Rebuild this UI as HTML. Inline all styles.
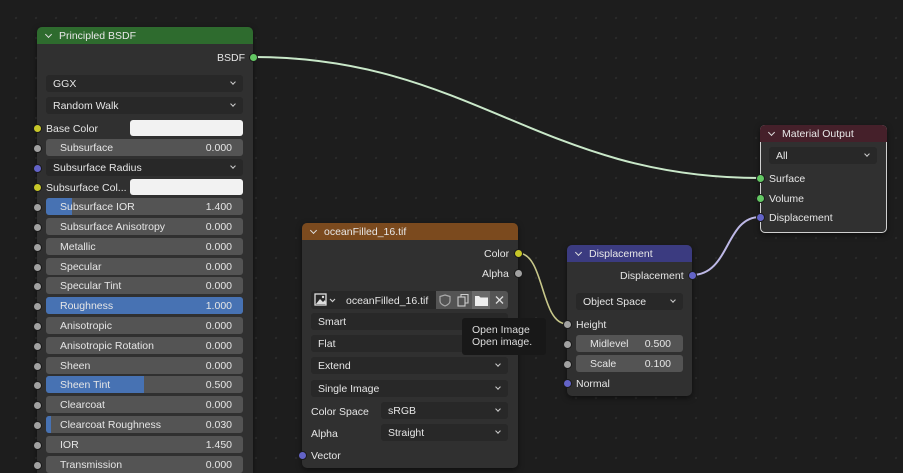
<!DOCTYPE html><html style="width:903px;height:473px;overflow:hidden"><head><style>
*{box-sizing:border-box;margin:0;padding:0}
body{width:903px;height:473px;overflow:hidden;background:#1d1d1d;background-image:radial-gradient(circle,#2a2a2a 1px,transparent 1.3px);background-size:20px 20px;background-position:6px 8px;font-family:"Liberation Sans",sans-serif;font-size:10.5px;color:#e6e6e6;position:relative}
.n{position:absolute;background:#303030;border-radius:5px;box-shadow:0 2px 6px rgba(0,0,0,.5)}
.h{position:absolute;left:0;right:0;top:0;height:17px;border-radius:5px 5px 0 0;padding-left:22px;line-height:18px;color:#e8e8e8}
.h:before{content:"";position:absolute;left:9px;top:5px;width:4px;height:4px;border-right:1.3px solid #ddd;border-bottom:1.3px solid #ddd;transform:rotate(45deg)}
.a{position:absolute;white-space:nowrap;line-height:14px}
.f{position:absolute;height:17px;border-radius:3px;background:#545454;line-height:18px;padding:0 9px 0 14px;overflow:hidden}
.f .v{position:absolute;right:11px;top:0}
.f .b{position:absolute;left:0;top:0;bottom:0;background:#4772b3}
.f span{position:relative}
.d{position:absolute;height:17px;border-radius:3px;background:#282828;line-height:18px;padding-left:7px}
.d:after{content:"";position:absolute;right:8px;top:5px;width:3px;height:3px;border-right:1.2px solid #ccc;border-bottom:1.2px solid #ccc;transform:rotate(45deg)}
.d.nc:after{display:none}
.c{position:absolute;width:7px;height:7px;border-radius:50%;background:#a1a1a1;margin:-3.5px 0 0 -3.5px;box-shadow:0 0 0 1px #1a1a1a}
.g{background:#63c763}.y{background:#c7c729}.p{background:#6363c7}
.w{position:absolute;background:#f2f2f2;border-radius:3px;height:16px}
</style></head><body>
<svg width="903" height="473" style="position:absolute;left:0;top:0">
<path d="M253 57 C470 57 540 178 760 178" stroke="#c9e8c9" stroke-width="2" fill="none"/>
<path d="M518 253 C545 253 540 324 567 324" stroke="#c7c78a" stroke-width="1.6" fill="none"/>
<path d="M692 275 C730 275 725 217 760 217" stroke="#bdb8e6" stroke-width="2" fill="none"/>
</svg>

<div class="n" style="left:37px;top:27px;width:216px;height:446px;border-radius:5px 5px 0 0">
<div class="h" style="background:#2e6b2e">Principled BSDF</div>
</div>
<div class="a" style="left:217px;top:51px">BSDF</div><div class="c g" style="left:253px;top:57px"></div>
<div class="d" style="left:46px;top:75px;width:197px">GGX</div>
<div class="d" style="left:46px;top:97px;width:197px">Random Walk</div>
<div class="c y" style="left:37px;top:128px"></div><div class="a" style="left:46px;top:122px">Base Color</div><div class="w" style="left:130px;top:120px;width:113px"></div>
<div class="c" style="left:37px;top:148px"></div><div class="f" style="left:46px;top:139px;width:197px"><span>Subsurface</span><span class="v">0.000</span></div>
<div class="c p" style="left:37px;top:168px"></div><div class="d" style="left:46px;top:159px;width:197px">Subsurface Radius</div>
<div class="c y" style="left:37px;top:187px"></div><div class="a" style="left:46px;top:181px">Subsurface Col...</div><div class="w" style="left:130px;top:179px;width:113px"></div>
<div class="c" style="left:37px;top:207px"></div><div class="f" style="left:46px;top:198px;width:197px"><div class="b" style="width:26px"></div><span>Subsurface IOR</span><span class="v">1.400</span></div>
<div class="c" style="left:37px;top:227px"></div><div class="f" style="left:46px;top:218px;width:197px"><span>Subsurface Anisotropy</span><span class="v">0.000</span></div>
<div class="c" style="left:37px;top:247px"></div><div class="f" style="left:46px;top:238px;width:197px"><span>Metallic</span><span class="v">0.000</span></div>
<div class="c" style="left:37px;top:267px"></div><div class="f" style="left:46px;top:258px;width:197px"><span>Specular</span><span class="v">0.000</span></div>
<div class="c" style="left:37px;top:286px"></div><div class="f" style="left:46px;top:277px;width:197px"><span>Specular Tint</span><span class="v">0.000</span></div>
<div class="c" style="left:37px;top:306px"></div><div class="f" style="left:46px;top:297px;width:197px"><div class="b" style="width:197px"></div><span>Roughness</span><span class="v">1.000</span></div>
<div class="c" style="left:37px;top:326px"></div><div class="f" style="left:46px;top:317px;width:197px"><span>Anisotropic</span><span class="v">0.000</span></div>
<div class="c" style="left:37px;top:346px"></div><div class="f" style="left:46px;top:337px;width:197px"><span>Anisotropic Rotation</span><span class="v">0.000</span></div>
<div class="c" style="left:37px;top:366px"></div><div class="f" style="left:46px;top:357px;width:197px"><span>Sheen</span><span class="v">0.000</span></div>
<div class="c" style="left:37px;top:385px"></div><div class="f" style="left:46px;top:376px;width:197px"><div class="b" style="width:98px"></div><span>Sheen Tint</span><span class="v">0.500</span></div>
<div class="c" style="left:37px;top:405px"></div><div class="f" style="left:46px;top:396px;width:197px"><span>Clearcoat</span><span class="v">0.000</span></div>
<div class="c" style="left:37px;top:425px"></div><div class="f" style="left:46px;top:416px;width:197px"><div class="b" style="width:5px"></div><span>Clearcoat Roughness</span><span class="v">0.030</span></div>
<div class="c" style="left:37px;top:445px"></div><div class="f" style="left:46px;top:436px;width:197px"><span>IOR</span><span class="v">1.450</span></div>
<div class="c" style="left:37px;top:465px"></div><div class="f" style="left:46px;top:456px;width:197px"><span>Transmission</span><span class="v">0.000</span></div>

<div class="n" style="left:302px;top:223px;width:216px;height:245px">
<div class="h" style="background:#7b4a1e">oceanFilled_16.tif</div>
</div>
<div class="a" style="left:484px;top:247px">Color</div><div class="c y" style="left:518px;top:253px"></div>
<div class="a" style="left:482px;top:267px">Alpha</div><div class="c" style="left:518px;top:273px"></div>
<div style="position:absolute;left:311px;top:291px;width:197px;height:18px;background:#282828;border-radius:3px"></div>
<svg style="position:absolute;left:314px;top:293px" width="26" height="14"><rect x="1" y="1" width="11" height="11" fill="none" stroke="#ddd" stroke-width="1.3"/><path d="M2 11 L6 6 L9 9 L11 7 L12 11Z" fill="#ddd"/><circle cx="9" cy="4" r="1.2" fill="#ddd"/><path d="M16 6 L18.5 8.5 L21 6" stroke="#ccc" fill="none" stroke-width="1.2"/></svg>
<div class="a" style="left:346px;top:294px">oceanFilled_16.tif</div>
<div style="position:absolute;left:436px;top:291px;width:72px;height:18px;background:#545454;border-radius:0 3px 3px 0"></div>
<div style="position:absolute;left:472px;top:291px;width:18px;height:18px;background:#6a6a6a"></div>
<svg style="position:absolute;left:436px;top:291px" width="72" height="18"><path d="M9 4 L14 5.5 L14 10 Q14 13 9 15 Q4 13 4 10 L4 5.5Z" fill="none" stroke="#aaa" stroke-width="1.2"/><rect x="22" y="6" width="7" height="9" fill="none" stroke="#ccc" stroke-width="1.1"/><path d="M25 6 V3.5 H32 V12 H29" fill="none" stroke="#ccc" stroke-width="1.1"/><path d="M39 5 H43 L44.5 6.5 H52 V15 H39Z" fill="#eee"/><path d="M60 5.5 L67 12.5 M67 5.5 L60 12.5" stroke="#ddd" stroke-width="1.3"/></svg>
<div class="d nc" style="left:311px;top:313px;width:197px">Smart</div>
<div class="d nc" style="left:311px;top:335px;width:197px">Flat</div>
<div class="d" style="left:311px;top:357px;width:197px">Extend</div>
<div class="d" style="left:311px;top:380px;width:197px">Single Image</div>
<div class="a" style="left:311px;top:405px">Color Space</div><div class="d" style="left:381px;top:402px;width:127px">sRGB</div>
<div class="a" style="left:311px;top:427px">Alpha</div><div class="d" style="left:381px;top:424px;width:127px">Straight</div>
<div class="c p" style="left:302px;top:455px"></div><div class="a" style="left:311px;top:449px">Vector</div>
<div style="position:absolute;left:462px;top:318px;width:84px;height:37px;background:#181818;border-radius:3px;padding:6px 0 0 10px;line-height:12px;color:#ddd">Open Image<br>Open image.</div>

<div class="n" style="left:567px;top:245px;width:125px;height:151px">
<div class="h" style="background:#3b3b80">Displacement</div>
</div>
<div class="a" style="left:620px;top:269px">Displacement</div><div class="c p" style="left:692px;top:275px"></div>
<div class="d" style="left:576px;top:293px;width:107px">Object Space</div>
<div class="c" style="left:567px;top:324px"></div><div class="a" style="left:576px;top:318px">Height</div>
<div class="c" style="left:567px;top:344px"></div><div class="f" style="left:576px;top:335px;width:107px"><span>Midlevel</span><span class="v" style="right:12px">0.500</span></div>
<div class="c" style="left:567px;top:364px"></div><div class="f" style="left:576px;top:355px;width:107px"><span>Scale</span><span class="v" style="right:12px">0.100</span></div>
<div class="c p" style="left:567px;top:383px"></div><div class="a" style="left:576px;top:377px">Normal</div>

<div class="n" style="left:760px;top:125px;width:127px;height:108px;border:1px solid #d0d0d0">
<div class="h" style="background:#45202a;top:-1px;left:-1px;right:-1px">Material Output</div>
</div>
<div class="d" style="left:769px;top:147px;width:108px">All</div>
<div class="c g" style="left:760px;top:178px"></div><div class="a" style="left:769px;top:172px">Surface</div>
<div class="c g" style="left:760px;top:198px"></div><div class="a" style="left:769px;top:192px">Volume</div>
<div class="c p" style="left:760px;top:217px"></div><div class="a" style="left:769px;top:211px">Displacement</div>
</body></html>
